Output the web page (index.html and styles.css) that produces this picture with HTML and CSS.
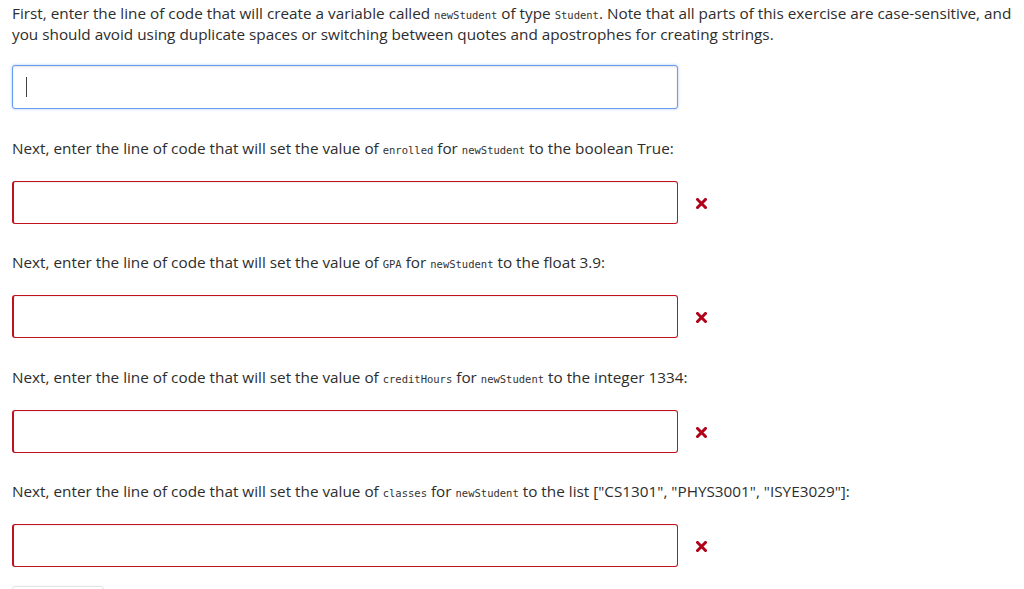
FILE: index.html
```html
<!DOCTYPE html>
<html>
<head>
<meta charset="utf-8">
<link rel="stylesheet" href="styles.css">
</head>
<body>
<div class="page">
  <p class="intro">First, enter the line of code that will create a variable called <code>newStudent</code> of type <code>Student</code>. Note that all parts of this exercise are case-sensitive, and you should avoid using duplicate spaces or switching between quotes and apostrophes for creating strings.</p>
  <div class="row first"><div class="field focus"><span class="caret"></span></div></div>

  <p class="label">Next, enter the line of code that will set the value of <code>enrolled</code> for <code>newStudent</code> to the boolean True:</p>
  <div class="row"><div class="field bad"></div><svg class="mark" width="11" height="11" viewBox="0 0 11 11"><path d="M1.5 1.5 L9.5 9.5 M9.5 1.5 L1.5 9.5" stroke="#b0001a" stroke-width="3" stroke-linecap="square"/></svg></div>

  <p class="label">Next, enter the line of code that will set the value of <code>GPA</code> for <code>newStudent</code> to the float 3.9:</p>
  <div class="row"><div class="field bad"></div><svg class="mark" width="11" height="11" viewBox="0 0 11 11"><path d="M1.5 1.5 L9.5 9.5 M9.5 1.5 L1.5 9.5" stroke="#b0001a" stroke-width="3" stroke-linecap="square"/></svg></div>

  <p class="label">Next, enter the line of code that will set the value of <code>creditHours</code> for <code>newStudent</code> to the integer 1334:</p>
  <div class="row"><div class="field bad"></div><svg class="mark" width="11" height="11" viewBox="0 0 11 11"><path d="M1.5 1.5 L9.5 9.5 M9.5 1.5 L1.5 9.5" stroke="#b0001a" stroke-width="3" stroke-linecap="square"/></svg></div>

  <p class="label">Next, enter the line of code that will set the value of <code>classes</code> for <code>newStudent</code> to the list ["CS1301", "PHYS3001", "ISYE3029"]:</p>
  <div class="row"><div class="field bad"></div><svg class="mark" width="11" height="11" viewBox="0 0 11 11"><path d="M1.5 1.5 L9.5 9.5 M9.5 1.5 L1.5 9.5" stroke="#b0001a" stroke-width="3" stroke-linecap="square"/></svg></div>

  <div class="btn"></div>
</div>
</body>
</html>
```

FILE: styles.css
```css
html, body {
  margin: 0;
  padding: 0;
  background: #ffffff;
  overflow: hidden;
}
.page {
  padding: 3px 12px 0 12px;
  font-family: "Open Sans", "Liberation Sans", sans-serif;
  font-size: 15.3px;
  line-height: 21px;
  color: #2d2d2d;
}
p {
  margin: 0;
}
code {
  font-family: "DejaVu Sans Mono", "Liberation Mono", monospace;
  font-size: 10.5px;
  line-height: 1;
  color: #333333;
}
.intro {
  width: 1005px;
}
.row {
  display: flex;
  align-items: center;
  gap: 18px;
  margin-top: 22px;
  margin-bottom: 28.5px;
}
.row.first {
  margin-top: 20px;
}
.field {
  box-sizing: border-box;
  width: 666px;
  height: 43px;
  border-radius: 3px;
  background: #ffffff;
  display: flex;
  align-items: center;
}
.field.focus {
  height: 44px;
  border: 1px solid #6a9cf0;
  box-shadow: 0 0 3px rgba(102, 150, 240, 0.55), inset 0 1px 2px rgba(0, 0, 0, 0.12);
  padding-left: 13px;
}
.caret {
  display: block;
  width: 1px;
  height: 20px;
  background: #444444;
}
.field.bad {
  border: 1px solid #c2101f;
  border-left-width: 2px;
  box-shadow: inset 0 1px 1px rgba(0, 0, 0, 0.06);
}
.mark {
  display: block;
  margin-top: 2px;
}
.btn {
  margin-top: -10px;
  width: 90px;
  height: 20px;
  border: 1px solid #e2e2e2;
  border-radius: 3px;
}
```
